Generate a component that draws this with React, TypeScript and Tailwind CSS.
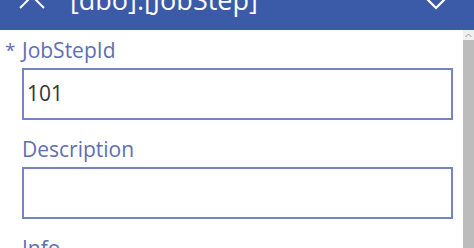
import React from "react";

const font = { fontFamily: '"Open Sans", "Noto Sans", sans-serif' };

function Field({ label, required, value }: { label: string; required?: boolean; value?: string }) {
  return (
    <div className="flex flex-col">
      <div className="flex h-[27px] items-center text-[21px] leading-[27px] text-[#5d6fb3]">
        {required && <span className="-ml-[17px] w-[17px] shrink-0 text-[19px]">*</span>}
        <span>{label}</span>
      </div>
      <div className="mt-[4px] flex h-[52px] items-center border-2 border-[#7585c3] bg-white pl-[3px] text-[21px] text-[#333333]">
        {value}
      </div>
    </div>
  );
}

export default function App() {
  return (
    <div className="flex h-[248px] w-[474px] flex-col overflow-hidden bg-white" style={font}>
      <div className="relative flex h-[30px] shrink-0 items-start overflow-hidden bg-[#3b5aa7] text-white">
        <svg className="absolute left-[18px] top-[-18px]" width="28" height="28" viewBox="0 0 28 28">
          <path d="M2 2 L26 26 M26 2 L2 26" stroke="white" strokeWidth="2" fill="none" />
        </svg>
        <div className="ml-[70px] mt-[-14px] text-[27px] leading-none whitespace-nowrap">[dbo].[JobStep]</div>
        <svg className="absolute left-[420px] top-[-16px]" width="40" height="28" viewBox="0 0 40 28">
          <path d="M4 12 L16 24 L36 4" stroke="white" strokeWidth="2.2" fill="none" />
        </svg>
      </div>
      <div className="flex min-h-0 flex-1">
        <div className="flex flex-1 flex-col gap-[16px] pl-[22px] pr-[10px] pt-[7px]">
          <Field label="JobStepId" required value="101" />
          <Field label="Description" />
          <Field label="Info" />
        </div>
        <div className="flex w-[11px] shrink-0 flex-col">
          <div className="flex h-[10px] items-center justify-center bg-[#f0f0f0]">
            <svg width="7" height="5" viewBox="0 0 7 5">
              <path d="M0.5 4 L3.5 1 L6.5 4" stroke="#9a9a9a" strokeWidth="1" fill="none" />
            </svg>
          </div>
          <div className="flex-1 bg-[#bcbcbc]" />
        </div>
      </div>
    </div>
  );
}
